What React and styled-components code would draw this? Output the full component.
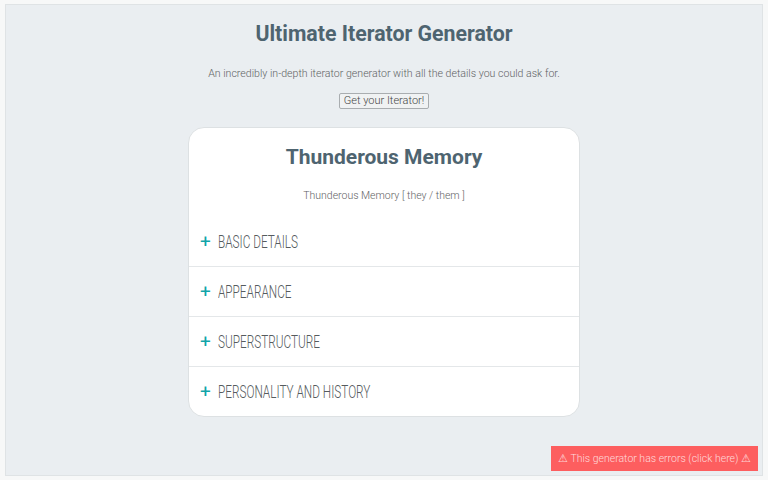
import styled, { createGlobalStyle } from "styled-components";

const GlobalStyle = createGlobalStyle`
  html, body {
    margin: 0;
    padding: 0;
    background: #f7f8f8;
  }
  body {
    font-family: Roboto, "Liberation Sans", sans-serif;
  }
`;

const Page = styled.div`
  box-sizing: border-box;
  width: 768px;
  height: 480px;
  padding: 4px 5px 4px 5px;
`;

const Panel = styled.main`
  position: relative;
  box-sizing: border-box;
  height: 472px;
  background: #eaeef1;
  border: 1px solid #dfe3e5;
  display: flex;
  flex-direction: column;
  align-items: center;
  padding-top: 16px;
`;

const Title = styled.h1`
  margin: 0;
  font-size: 21.3px;
  font-weight: 700;
  color: #4e6470;
  line-height: 26px;
`;

const Description = styled.p`
  margin: 20px 0 0;
  font-size: 10.6px;
  font-weight: 300;
  color: #5f6365;
  line-height: 14px;
`;

const GetButton = styled.button`
  margin-top: 12px;
  padding: 1px 4px;
  font-family: Roboto, "Liberation Sans", sans-serif;
  font-size: 11px;
  font-weight: 300;
  color: #444;
  background: #f0f2f3;
  border: 1px solid #a9adb0;
  border-radius: 2px;
  line-height: 12px;
`;

const Card = styled.section`
  box-sizing: border-box;
  width: 392px;
  margin-top: 18px;
  background: #fff;
  border: 1px solid #dde1e3;
  border-radius: 16px;
  overflow: hidden;
`;

const CardTitle = styled.h2`
  margin: 15px 0 0;
  text-align: center;
  font-size: 21px;
  font-weight: 700;
  color: #4e6470;
  line-height: 28px;
`;

const Pronouns = styled.p`
  margin: 18px 0 0;
  text-align: center;
  font-size: 10.5px;
  font-weight: 300;
  color: #5f6365;
  line-height: 14px;
`;

const Sections = styled.div`
  margin-top: 14px;
`;

const Row = styled.div`
  display: flex;
  align-items: center;
  gap: 6px;
  height: 49px;
  padding-left: 11px;
  border-top: ${(p) => (p.$first ? "none" : "1px solid #e4e7e9")};
  cursor: pointer;
`;

const Plus = styled.span`
  width: 12px;
  font-size: 19px;
  font-weight: 400;
  color: #11a4a8;
  line-height: 1;
`;

const Label = styled.span`
  display: inline-block;
  font-family: "Roboto", "Liberation Sans", sans-serif;
  font-size: 19px;
  font-weight: 300;
  color: #555b5e;
  transform: scaleX(0.62);
  transform-origin: left center;
  white-space: nowrap;
`;

const ErrorBadge = styled.button`
  position: absolute;
  right: 4px;
  bottom: 4px;
  height: 25px;
  padding: 0 7px;
  background: #fd5e5f;
  border: none;
  color: rgba(255, 255, 255, 0.78);
  font-family: Roboto, "Liberation Sans", sans-serif;
  font-size: 10.5px;
  font-weight: 300;
  cursor: pointer;
`;

const sections = [
  "BASIC DETAILS",
  "APPEARANCE",
  "SUPERSTRUCTURE",
  "PERSONALITY AND HISTORY",
];

export default function App() {
  return (
    <Page>
      <GlobalStyle />
      <Panel>
        <Title>Ultimate Iterator Generator</Title>
        <Description>
          An incredibly in-depth iterator generator with all the details you
          could ask for.
        </Description>
        <GetButton>Get your Iterator!</GetButton>
        <Card>
          <CardTitle>Thunderous Memory</CardTitle>
          <Pronouns>Thunderous Memory [ they / them ]</Pronouns>
          <Sections>
            {sections.map((s, i) => (
              <Row key={s} $first={i === 0}>
                <Plus>+</Plus>
                <Label>{s}</Label>
              </Row>
            ))}
          </Sections>
        </Card>
        <ErrorBadge>⚠ This generator has errors (click here) ⚠</ErrorBadge>
      </Panel>
    </Page>
  );
}
